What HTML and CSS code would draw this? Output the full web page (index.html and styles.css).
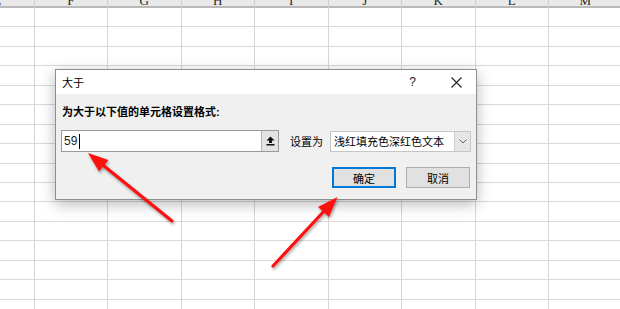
FILE: index.html
```html
<!DOCTYPE html>
<html lang="zh-CN">
<head>
    <meta charset="UTF-8">
    <title>大于</title>
    <link rel="stylesheet" href="styles.css">
</head>
<body>

    <div class="sheet" id="sheet">
        <div class="head-row" id="head-row"></div>
    </div>

    <div class="dialog">
        <div class="title-bar">
            <span class="title">大于</span>
            <span class="help">?</span>
            <svg class="close" width="11" height="11" viewBox="0 0 11 11">
                <path d="M0.5 0.5 L10.5 10.5 M10.5 0.5 L0.5 10.5" stroke="#222" stroke-width="1.1" fill="none"/>
            </svg>
        </div>
        <div class="dialog-body">
            <div class="prompt">为大于以下值的单元格设置格式:</div>
            <div class="input-row">
                <div class="value-box">
                    <span class="value">59</span><span class="caret"></span>
                    <div class="pick-btn">
                        <svg width="9" height="10" viewBox="0 0 9 10">
                            <path d="M4.5 0.5 L8.5 4.5 L6 4.5 L6 7 L3 7 L3 4.5 L0.5 4.5 Z" fill="#111"/>
                            <rect x="0.5" y="8" width="8" height="1.5" fill="#111"/>
                        </svg>
                    </div>
                </div>
                <span class="set-label">设置为</span>
                <div class="select-box">
                    <span>浅红填充色深红色文本</span>
                    <div class="select-arrow">
                        <svg width="8" height="5" viewBox="0 0 8 5">
                            <path d="M0.5 0.5 L4 4 L7.5 0.5" stroke="#666" stroke-width="1" fill="none"/>
                        </svg>
                    </div>
                </div>
            </div>
            <div class="button-row">
                <button class="btn btn-default">确定</button>
                <button class="btn">取消</button>
            </div>
        </div>
    </div>

    <svg class="arrows" width="620" height="309" viewBox="0 0 620 309">
        <line x1="172" y1="221" x2="101" y2="163.5" stroke="#ff1010" stroke-width="3.2" stroke-linecap="round"/>
        <polygon points="88,153 108.5,160 99,171.5" fill="#ff1010"/>
        <line x1="273" y1="266" x2="326" y2="209" stroke="#ff1010" stroke-width="3.2" stroke-linecap="round"/>
        <polygon points="337.5,197 329,217 318,207" fill="#ff1010"/>
    </svg>

    <script>
        const cols = ['E', 'F', 'G', 'H', 'I', 'J', 'K', 'L', 'M'];
        const sheet = document.getElementById('sheet');
        const headRow = document.getElementById('head-row');

        cols.forEach((c) => {
            const cell = document.createElement('div');
            cell.className = 'head-cell';
            cell.textContent = c;
            headRow.appendChild(cell);
        });

        for (let r = 0; r < 16; r++) {
            const row = document.createElement('div');
            row.className = 'row';
            cols.forEach(() => {
                const cell = document.createElement('div');
                cell.className = 'cell';
                row.appendChild(cell);
            });
            sheet.appendChild(row);
        }
    </script>

</body>
</html>
```

FILE: styles.css
```css
body {
    margin: 0;
    width: 620px;
    height: 309px;
    overflow: hidden;
    position: relative;
    background-color: #fff;
    font-family: "Liberation Sans", "Noto Sans CJK SC", sans-serif;
    color: #000;
}

/* spreadsheet behind the dialog */
.sheet {
    margin-left: -39px;
    width: 662px;
}

.head-row {
    display: grid;
    grid-template-columns: repeat(9, 73.5px);
    height: 22px;
    margin-top: -14px;
    background-color: #e9e9e9;
    border-bottom: 2px solid #b9b9b9;
    box-sizing: border-box;
}

.head-cell {
    border-right: 1px solid #cfcfcf;
    text-align: center;
    font-family: "Liberation Serif", serif;
    font-size: 13px;
    line-height: 14px;
    padding-top: 8px;
    color: #262626;
}

.row {
    display: grid;
    grid-template-columns: repeat(9, 73.5px);
    height: 19.45px;
    box-sizing: border-box;
    border-bottom: 1px solid #d9d9d9;
}

.cell {
    border-right: 1px solid #d6d6d6;
}

/* dialog */
.dialog {
    position: absolute;
    left: 55px;
    top: 69px;
    width: 422px;
    height: 131px;
    box-sizing: border-box;
    border: 1px solid #8e8e8e;
    background-color: #f0f0f0;
    box-shadow: 0 4px 14px rgba(0, 0, 0, 0.28);
}

.title-bar {
    height: 24px;
    background-color: #fff;
    display: flex;
    align-items: center;
    padding: 0 14px 0 6px;
}

.title {
    font-size: 11px;
    flex: 1;
}

.help {
    font-size: 12px;
    margin-right: 35px;
    color: #222;
}

.dialog-body {
    padding: 10px 5px 0 5px;
}

.prompt {
    font-size: 11px;
    font-weight: bold;
    line-height: 16px;
    margin-left: 1px;
}

.input-row {
    display: flex;
    align-items: center;
    margin-top: 10px;
    height: 22px;
}

.value-box {
    width: 218px;
    height: 22px;
    box-sizing: border-box;
    border: 1px solid #9a9a9a;
    background-color: #fff;
    display: flex;
    align-items: center;
    padding-left: 2px;
}

.value {
    font-size: 12px;
    color: #222;
}

.caret {
    width: 1px;
    height: 15px;
    background-color: #000;
    margin-left: 2px;
    flex: 1;
    max-width: 1px;
}

.pick-btn {
    margin-left: auto;
    width: 17px;
    height: 20px;
    box-sizing: border-box;
    border-left: 1px solid #b4b4b4;
    background-color: #e3e3e3;
    display: flex;
    align-items: center;
    justify-content: center;
}

.set-label {
    font-size: 11px;
    margin-left: 11px;
    width: 40px;
}

.select-box {
    width: 141px;
    height: 21px;
    box-sizing: border-box;
    border: 1px solid #c6c6c6;
    background-color: #fff;
    display: flex;
    align-items: center;
    padding-left: 3px;
    font-size: 11px;
}

.select-box span {
    flex: 1;
}

.select-arrow {
    width: 16px;
    height: 19px;
    box-sizing: border-box;
    border-left: 1px solid #cfcfcf;
    background-color: #e6e6e6;
    display: flex;
    align-items: center;
    justify-content: center;
}

.button-row {
    display: flex;
    justify-content: flex-end;
    gap: 10px;
    margin-top: 15px;
    padding-right: 1px;
}

.btn {
    width: 64px;
    height: 21px;
    padding: 0;
    font-family: "Noto Sans CJK SC", sans-serif;
    font-size: 11px;
    background-color: #e1e1e1;
    border: 1px solid #adadad;
    color: #000;
}

.btn-default {
    border: 2px solid #0078d7;
}

.arrows {
    position: absolute;
    left: 0;
    top: 0;
    pointer-events: none;
    filter: drop-shadow(1px 2px 1.5px rgba(0, 0, 0, 0.35));
}
```
